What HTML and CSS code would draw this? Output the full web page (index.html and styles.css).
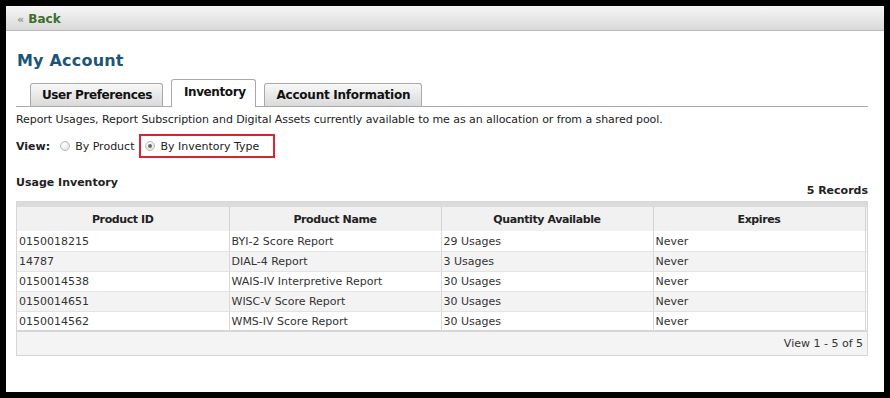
FILE: index.html
```html
<!DOCTYPE html>
<html>
<head>
<meta charset="utf-8">
<link rel="stylesheet" href="styles.css">
</head>
<body>
<div class="page">
  <div class="topbar"><a class="back"><span class="laquo">«</span> Back</a></div>
  <div class="content">
    <h1 class="title">My Account</h1>
    <div class="tabs">
      <div class="tab">User Preferences</div>
      <div class="tab active">Inventory</div>
      <div class="tab wide">Account Information</div>
    </div>
    <p class="desc">Report Usages, Report Subscription and Digital Assets currently available to me as an allocation or from a shared pool.</p>
    <div class="view">
      <span class="view-label">View:</span>
      <label class="opt"><span class="radio"></span>By Product</label>
      <label class="opt boxed"><span class="radio checked"></span>By Inventory Type</label>
    </div>
    <div class="usage-head">
      <span class="usage-title">Usage Inventory</span>
      <span class="records">5 Records</span>
    </div>
    <div class="grid">
      <div class="grid-cap"></div>
      <table class="tbl">
        <colgroup><col class="c1"><col class="c2"><col class="c3"><col class="c4"><col class="c5"></colgroup>
        <thead>
          <tr><th>Product ID</th><th>Product Name</th><th>Quantity Available</th><th>Expires</th><th class="sp"></th></tr>
        </thead>
        <tbody>
          <tr><td>0150018215</td><td>BYI-2 Score Report</td><td>29 Usages</td><td>Never</td><td class="sp"></td></tr>
          <tr class="alt"><td>14787</td><td>DIAL-4 Report</td><td>3 Usages</td><td>Never</td><td class="sp"></td></tr>
          <tr><td>0150014538</td><td>WAIS-IV Interpretive Report</td><td>30 Usages</td><td>Never</td><td class="sp"></td></tr>
          <tr class="alt"><td>0150014651</td><td>WISC-V Score Report</td><td>30 Usages</td><td>Never</td><td class="sp"></td></tr>
          <tr><td>0150014562</td><td>WMS-IV Score Report</td><td>30 Usages</td><td>Never</td><td class="sp"></td></tr>
        </tbody>
      </table>
      <div class="pager">View 1 - 5 of 5</div>
    </div>
  </div>
</div>
</body>
</html>
```
FILE: styles.css
```css
html, body { margin: 0; padding: 0; }
body {
  background: #000;
  padding: 6px;
  font-family: "DejaVu Sans", Verdana, sans-serif;
  font-size: 11px;
  color: #222;
}
.page {
  background: #fff;
  width: 878px;
  height: 386px;
  overflow: hidden;
}
.topbar {
  box-sizing: border-box;
  height: 25px;
  border-bottom: 1px solid #b8b8b8;
  background: linear-gradient(#f6f6f6, #d9d9d9);
  display: flex;
  align-items: center;
  padding-left: 11px;
  padding-top: 2px;
}
.back {
  color: #3c6e2c;
  font-weight: bold;
  font-size: 12px;
}
.laquo { color: #8a9a8a; font-size: 11px; }
.content { padding: 0 16px 0 10px; }
.title {
  margin: 19px 0 0 1px;
  font-size: 16px;
  line-height: 22px;
  color: #1c5578;
  font-weight: bold;
  letter-spacing: 0.2px;
}
.tabs {
  margin-top: 8px;
  display: flex;
  align-items: flex-end;
  gap: 8px;
  padding-left: 14px;
  border-bottom: 1px solid #a9a9a9;
  height: 26px;
}
.tab {
  height: 22px;
  line-height: 23px;
  padding: 0 10px 0 11px;
  border: 1px solid #a9a9a9;
  border-bottom: none;
  border-radius: 3px 3px 0 0;
  background: linear-gradient(#f8f8f8, #dadada);
  font-weight: bold;
  font-size: 12px;
  letter-spacing: -0.4px;
  color: #111;
}
.tab.active {
  height: 27px;
  line-height: 24px;
  margin-bottom: -1px;
  background: #fff;
  padding: 0 9px 0 12px;
}
.tab.wide { padding: 0 11px 0 12px; letter-spacing: -0.25px; }
.desc {
  margin: 6px 0 0;
  line-height: 14px;
  color: #222;
  letter-spacing: -0.07px;
}
.view {
  margin-top: 7px;
  height: 24px;
  display: flex;
  align-items: center;
}
.view-label { font-weight: bold; margin-right: 10px; }
.opt { display: flex; align-items: center; }
.radio {
  width: 8px;
  height: 8px;
  border-radius: 50%;
  border: 1px solid #b9b9b9;
  background: radial-gradient(circle at 40% 35%, #fff, #dcdcdc);
  margin-right: 5px;
  position: relative;
}
.radio.checked::after {
  content: "";
  position: absolute;
  left: 2px; top: 2px;
  width: 4px; height: 4px;
  border-radius: 50%;
  background: #6a6a6a;
}
.boxed {
  margin-left: 5px;
  height: 20px;
  border: 2px solid #d9232f;
  padding: 0 14px 0 4px;
}
.usage-head {
  margin-top: 18px;
  display: flex;
  justify-content: space-between;
  align-items: flex-start;
  height: 25px;
}
.usage-title { font-weight: bold; line-height: 14px; }
.records { font-weight: bold; font-size: 11px; line-height: 14px; margin-top: 8px; }
.grid {
  width: 850px;
  border: 1px solid #d6d6d6;
}
.grid-cap { height: 5px; background: #dcdcdc; }
.tbl {
  width: 100%;
  border-collapse: collapse;
  table-layout: fixed;
}
.c1, .c2, .c3, .c4 { width: 212px; }
.tbl th {
  height: 24px;
  padding: 0;
  background: #f1f1f1;
  font-weight: bold;
  border-right: 1px solid #d3d3d3;
  text-align: center;
  color: #222;
  letter-spacing: -0.4px;
}
.tbl td {
  box-sizing: border-box;
  height: 20px;
  padding: 1px 0 0 2px;
  border-right: 1px solid #d9d9d9;
  border-bottom: 1px solid #e4e4e4;
  color: #333;
  white-space: nowrap;
}
.tbl tr.alt td { background: #f3f3f3; }
.tbl .sp { border-right: none; background: #fff; }
.tbl th.sp { background: #f1f1f1; }
.tbl tr.alt td.sp { background: #fff; }
.tbl tbody tr:last-child td { border-bottom: 2px solid #d6d6d6; }
.pager {
  height: 23px;
  background: #f4f4f4;
  text-align: right;
  padding-right: 4px;
  line-height: 24px;
  color: #333;
}
```
